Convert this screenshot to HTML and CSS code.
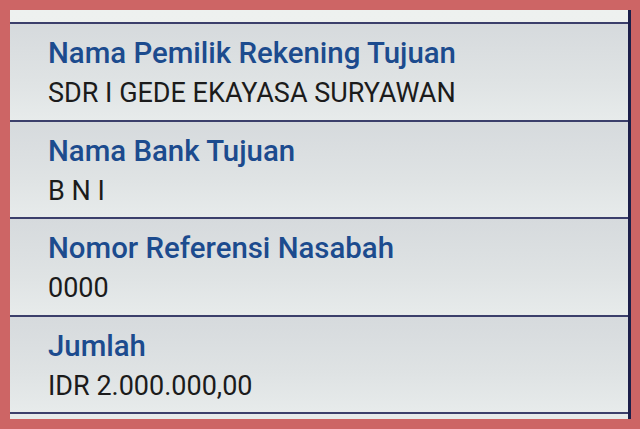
FILE: index.html
```html
<!DOCTYPE html>
<html lang="id">
<head>
    <meta charset="UTF-8">
    <meta name="viewport" content="width=device-width, initial-scale=1.0">
    <title>Detail Transfer</title>
    <link rel="stylesheet" href="styles.css">
</head>
<body>
    <div class="panel">
        <div class="row">
            <div class="label">Nama Pemilik Rekening Tujuan</div>
            <div class="value">SDR I GEDE EKAYASA SURYAWAN</div>
        </div>
        <div class="row">
            <div class="label">Nama Bank Tujuan</div>
            <div class="value">B N I</div>
        </div>
        <div class="row">
            <div class="label">Nomor Referensi Nasabah</div>
            <div class="value">0000</div>
        </div>
        <div class="row">
            <div class="label">Jumlah</div>
            <div class="value">IDR 2.000.000,00</div>
        </div>
    </div>
</body>
</html>
```

FILE: styles.css
```css
body {
    margin: 0;
    padding: 10px 10px 11px 10px;
    background-color: #cd6565;
    width: 640px;
    height: 429px;
    box-sizing: border-box;
    font-family: Roboto, "Noto Sans", sans-serif;
    overflow: hidden;
}

/* Weisser Streifen oben, dann die Zeilen */
.panel {
    width: 618px;
    background: linear-gradient(#eef1ef, #e6eaea);
    border-right: 3px solid #1c1f4a;
    padding-top: 12px;
    padding-bottom: 5px;
}

.row {
    height: 95.5px;
    border-top: 2px solid #3b3f6b;
    background: linear-gradient(#d6dadd, #dfe3e4 60%, #e7ebeb);
    box-sizing: content-box;
    padding-left: 38px;
    display: flex;
    flex-direction: column;
}

.row:last-child {
    border-bottom: 2px solid #3b3f6b;
}

.label {
    color: #1c4b8e;
    font-size: 29.4px;
    font-weight: 500;
    line-height: 34px;
    margin-top: 12px;
    white-space: nowrap;
}

.value {
    color: #1b1b1b;
    font-size: 27px;
    line-height: 32px;
    margin-top: 7px;
    white-space: nowrap;
}
```
